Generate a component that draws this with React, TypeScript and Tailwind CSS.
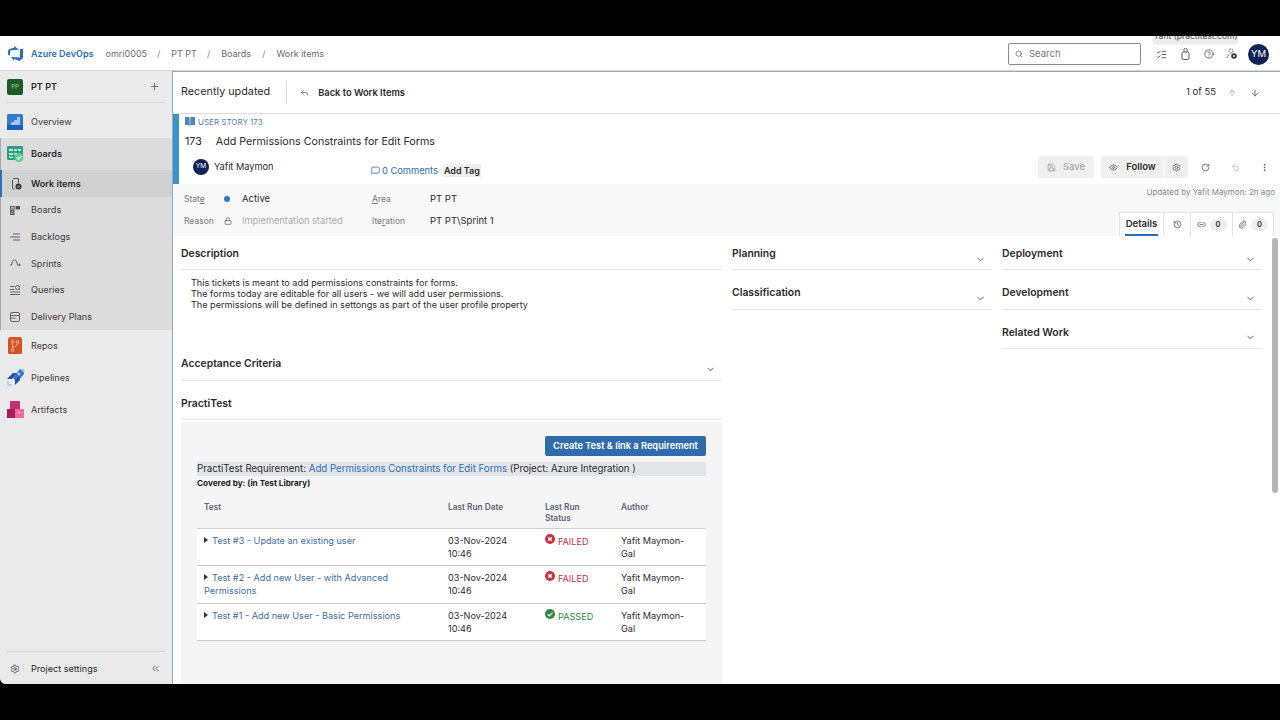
import React from "react";
import { Search, ListChecks, CircleHelp, ArrowUp, ArrowDown, Undo2, Plus, MessageSquare, Save, Eye, Settings, RotateCw, MoreVertical, History, Link2, Paperclip, ChevronDown, Lock, ChevronsLeft, Reply } from "lucide-react";

const Logo = () => (
  <svg width="16" height="16" viewBox="0 0 16 16"><path d="M15 3.600v8.500l-3.500 2.900-5.400-2v2L3 10.900l8.900.7V3l4-.2zM11 3.400L6 0v1.700L1.400 3 0 4.800v4l2 .9V4.500z" fill="#2a6fb5" /></svg>
);
const OverviewIcon = () => (
  <svg width="16" height="16" viewBox="0 0 16 16"><rect width="16" height="16" rx="1.500" fill="#2f7bd0" /><path d="M0 11h16v5H0z" fill="#1d5fb3" /><path d="M4 11V8h3V6h3V3h3v8z" fill="#9cc8f0" /></svg>
);
const BoardsIcon = () => (
  <svg width="18" height="17" viewBox="0 0 18 17"><rect width="16" height="14" rx="1" fill="#2f9e80" /><path d="M2 3h4v2H2zM7 3h3v2H7zM11 3h3v2h-3zM2 7h4v2H2zM7 7h3v2H7zM2 10.500h4v1.500H2z" fill="#b8e6d6" /><circle cx="12" cy="11.500" r="4.500" fill="#5fcf8c" /><path d="M9.800 11.500l1.700 1.700 2.800-3" stroke="#fff" strokeWidth="1.200" fill="none" /></svg>
);
const ReposIcon = () => (
  <svg width="16" height="17" viewBox="0 0 16 17"><path d="M2.500 0h11L15 2v13.500a1.500 1.500 0 0 1-1.500 1.500h-11A1.500 1.500 0 0 1 1 15.500V2z" fill="#d9501e" /><circle cx="5.500" cy="13" r="1.400" fill="none" stroke="#f6b899" /><circle cx="10.500" cy="5" r="1.400" fill="none" stroke="#f6b899" /><circle cx="5.500" cy="4.500" r="1.400" fill="none" stroke="#f6b899" /><path d="M5.500 6v5.500M10.500 6.500c0 3-5 2.500-5 5" fill="none" stroke="#f6b899" /></svg>
);
const PipelinesIcon = () => (
  <svg width="18" height="17" viewBox="0 0 18 17"><path d="M17 0v5l-7 8-4-4 7-9z" fill="#2f6fd8" /><path d="M13 0h4v4z" fill="#9cc4f4" /><circle cx="12" cy="5" r="1.400" fill="#bcd8f8" /><path d="M6 4h4L5 10H0z" fill="#1f4fae" /><path d="M13 7v4l-5 5v-5z" fill="#1f4fae" /><path d="M1 12v4h4" fill="none" stroke="#8fb4e8" strokeWidth="1" /></svg>
);
const ArtifactsIcon = () => (
  <svg width="17" height="17" viewBox="0 0 17 17"><rect x="3" width="10" height="8" fill="#c72c6e" /><rect y="8" width="8" height="9" fill="#a81e5b" /><rect x="8" y="8" width="9" height="9" fill="#ef6a9e" /><rect x="11" y="11" width="3" height="1" fill="#fff" opacity=".7" /></svg>
);
const FailIcon = () => (
  <svg width="10" height="10" viewBox="0 0 10 10" className="shrink-0"><circle cx="5" cy="5" r="5" fill="#c8323c" /><path d="M3.200 3.200l3.600 3.600M6.800 3.200L3.200 6.800" stroke="#fff" strokeWidth="1.400" /></svg>
);
const PassIcon = () => (
  <svg width="10" height="10" viewBox="0 0 10 10" className="shrink-0"><circle cx="5" cy="5" r="5" fill="#2c8a3f" /><path d="M2.600 5.200l1.700 1.700 3.100-3.300" stroke="#fff" strokeWidth="1.300" fill="none" /></svg>
);
const BookIcon = () => (
  <svg width="10" height="9" viewBox="0 0 10 9"><path d="M0 0h3.500c.8 0 1.200.4 1.200 1v8C4.300 8.500 3.800 8 3 8H0z" fill="#4a86bd" /><path d="M10 0H6.500c-.8 0-1.200.4-1.200 1v8c.4-.5.9-1 1.700-1h3z" fill="#4a86bd" /></svg>
);
const WorkItemsIcon = () => (
  <svg width="12" height="13" viewBox="0 0 12 13" fill="none"><path d="M7 1.500h1.500V6M2.500 3V11a1 1 0 0 0 1 1H5" stroke="#555" /><path d="M3 1.500h4" stroke="#555" /><circle cx="8.500" cy="9.500" r="3" fill="#333" /><path d="M7.200 9.500l1 1 1.600-1.800" stroke="#fff" strokeWidth=".8" /></svg>
);
const MiniBoards = () => (
  <svg width="10" height="9" viewBox="0 0 10 9" fill="none" stroke="#555"><rect x=".5" y=".5" width="3.500" height="2.500" /><rect x="6" y=".5" width="3.500" height="2.500" fill="#555" /><rect x=".5" y="4.500" width="3.500" height="1.500" /><rect x=".5" y="7" width="3.500" height="1.500" /></svg>
);
const MiniBacklogs = () => (
  <svg width="10" height="8" viewBox="0 0 10 8" fill="none" stroke="#555" strokeWidth=".9"><path d="M3 1h7M0 4h10M3 7h7" /></svg>
);
const MiniSprints = () => (
  <svg width="11" height="8" viewBox="0 0 11 8" fill="none" stroke="#555" strokeWidth=".9"><path d="M0 6h1.500C2 3.500 2.500 1 4.500 1S7 3.500 7.500 6H10" /><path d="M9 4.700L10.500 6 9 7.300" /></svg>
);
const MiniQueries = () => (
  <svg width="11" height="10" viewBox="0 0 11 10" fill="none" stroke="#555" strokeWidth=".9"><path d="M0 1.500h4.500M0 4.500h4.500M0 7h10M0 9.500h10" /><circle cx="7.500" cy="2.500" r="2" /><path d="M9 4l1 1" /></svg>
);
const MiniPlans = () => (
  <svg width="10" height="10" viewBox="0 0 10 10" fill="none" stroke="#555" strokeWidth=".9"><rect x=".5" y=".5" width="9" height="9" rx="1.500" /><path d="M.5 3.500h9M.5 6h5" /></svg>
);
const BagIcon = () => (
  <svg width="9" height="12" viewBox="0 0 9 12" fill="none" stroke="#555" strokeWidth="1" className="ml-[14px]"><rect x="1" y="4" width="7" height="7.500" rx="1.500" /><path d="M3 4V1.500a1.500 1.500 0 0 1 3 0V4" /></svg>
);
const UserBadge = () => (
  <svg width="12" height="12" viewBox="0 0 12 12" fill="none" className="ml-[12px]"><circle cx="5" cy="3" r="2" stroke="#555" strokeDasharray="1.500 .8" /><path d="M1 10c0-2 1.500-3.500 3-3.500" stroke="#555" strokeDasharray="1.500 .8" /><circle cx="8" cy="8" r="2.800" fill="#333" /><circle cx="8" cy="8" r=".9" fill="#fff" /></svg>
);

function SideMain({ icon, label, bold }: { icon: React.ReactNode; label: string; bold?: boolean }) {
  return (
    <div className="h-8 flex items-center">
      <div className={bold ? "w-[30px] pl-[6px] flex items-center" : "w-[31px] pl-[7px] flex items-center"}>{icon}</div>
      <span className={bold ? "font-semibold text-[#2b2b2b]" : "text-[#3a3a3a]"}>{label}</span>
    </div>
  );
}
function SideSub({ icon, label, active }: { icon: React.ReactNode; label: string; active?: boolean }) {
  return (
    <div className={active ? "h-[27px] flex items-center bg-[#d1d1d1] border-l-2 border-[#2a6fb5] -ml-px" : "h-[26.600px] flex items-center"}>
      <div className={active ? "w-[29px] pl-[8px]" : "w-[30px] pl-[9px]"}>{icon}</div>
      <span className={active ? "font-semibold text-[#2b2b2b]" : "text-[#3a3a3a]"}>{label}</span>
    </div>
  );
}
function Section({ title, chevron, first }: { title: string; chevron?: boolean; first?: boolean }) {
  return (
    <div className={(first ? "h-[34.300px] pt-[11px]" : "h-[39.300px] pt-[16px]") + " border-b border-[#e6e6e6] flex items-start justify-between"}>
      <span className="text-[10.400px] leading-[14px] font-semibold text-[#2b2b2b]">{title}</span>
      {chevron && <ChevronDown size={11} className="mt-[6.500px] mr-[6px] text-[#555]" />}
    </div>
  );
}
const rows = [
  { t: "Test #3 - Update an existing user", s: "FAILED" },
  { t: "Test #2 - Add new User - with Advanced Permissions", s: "FAILED" },
  { t: "Test #1 - Add new User - Basic Permissions", s: "PASSED" },
];

export default function App() {
  return (
    <div className="w-[1280px] h-[720px] bg-black flex flex-col overflow-hidden text-[9px] text-[#2b2b2b]" style={{ fontFamily: "Inter, 'Liberation Sans', sans-serif" }}>
      <div className="h-9 shrink-0" />
      <div className="h-[648px] shrink-0 bg-white rounded-bl-[6px] overflow-hidden flex flex-col relative">
        <div className="absolute left-[1153px] top-[-7px] w-[85px] h-[14px] text-center bg-[#ececec] rounded-[3px] text-[8.500px] leading-[14px] text-[#555] shadow-sm whitespace-nowrap">Yafit (practitest.com)</div>
        {/* top bar */}
        <div className="h-[35px] shrink-0 flex items-center pt-[2px] border-b border-[#d8d8d8] text-[9px]">
          <div className="w-[31px] pl-[8px]"><Logo /></div>
          <span className="font-semibold text-[#2a6fb5]">Azure DevOps</span>
          <span className="ml-[12px] text-[#6b6b6b]">omri0005</span>
          <span className="ml-[10px] text-[#888]">/</span>
          <span className="ml-[11px] text-[#6b6b6b]">PT PT</span>
          <span className="ml-[10px] text-[#888]">/</span>
          <span className="ml-[11px] text-[#6b6b6b]">Boards</span>
          <span className="ml-[11px] text-[#888]">/</span>
          <span className="ml-[11px] text-[#6b6b6b]">Work items</span>
          <div className="ml-auto w-[133px] h-[22px] border border-[#8a8a8a] rounded-[2px] flex items-center pl-[6px] gap-[6px] text-[9.500px] text-[#777]">
            <Search size={8} className="text-[#555]" /><span>Search</span>
          </div>
          <div className="ml-[15px] flex items-center text-[#555]">
            <ListChecks size={11} />
            <BagIcon />
            <CircleHelp size={10} className="ml-[14px]" />
            <UserBadge />
          </div>
          <div className="ml-[10px] mr-[11px] w-[21px] h-[21px] rounded-full bg-[#0f2357] text-white text-[9.500px] flex items-center justify-center">YM</div>
        </div>
        <div className="flex-1 flex min-h-0">
          {/* sidebar */}
          <div className="w-[172px] shrink-0 bg-[#eaeaea] flex flex-col text-[9.100px]">
            <div className="h-[32px] flex items-center mx-[7px] border-b border-[#d9d9d9]">
              <div className="w-[16px] h-[16px] rounded-[2px] bg-[#1c5a26] text-[#9fd3a6] text-[6px] flex items-center justify-center">PP</div>
              <span className="ml-[8px] font-semibold">PT PT</span>
              <Plus size={11} className="ml-auto mr-[5px] text-[#666]" />
            </div>
            <div className="h-[3px]" />
            <SideMain icon={<OverviewIcon />} label="Overview" />
            <div className="bg-[#dcdcdc] border-l border-[#a8a8a8]">
              <SideMain icon={<BoardsIcon />} label="Boards" bold />
              <SideSub active icon={<WorkItemsIcon />} label="Work items" />
              <SideSub icon={<MiniBoards />} label="Boards" />
              <SideSub icon={<MiniBacklogs />} label="Backlogs" />
              <SideSub icon={<MiniSprints />} label="Sprints" />
              <SideSub icon={<MiniQueries />} label="Queries" />
              <SideSub icon={<MiniPlans />} label="Delivery Plans" />
            </div>
            <SideMain icon={<ReposIcon />} label="Repos" />
            <SideMain icon={<PipelinesIcon />} label="Pipelines" />
            <SideMain icon={<ArtifactsIcon />} label="Artifacts" />
            <div className="mt-auto mx-[7px] h-[33px] pt-px border-t border-[#d4d4d4] flex items-center">
              <Settings size={10} className="ml-[3px] text-[#555]" />
              <span className="ml-[11px]">Project settings</span>
              <ChevronsLeft size={11} className="ml-auto mr-[4px] text-[#666]" />
            </div>
          </div>
          {/* main */}
          <div className="flex-1 min-w-0 flex flex-col border-l border-[#8eaacb] border-t border-t-[#9aa9bb]">
            <div className="h-[42px] shrink-0 flex items-center border-b border-[#dcdcdc]">
              <span className="ml-[8px] text-[10.800px] text-[#2b2b2b]">Recently updated</span>
              <div className="ml-[16px] w-px h-[23px] bg-[#d8d8d8]" />
              <Reply size={9} className="ml-[13px] text-[#666]" />
              <span className="ml-[9px] font-semibold text-[9.300px]">Back to Work Items</span>
              <span className="ml-auto text-[9.500px]">1 of 55</span>
              <ArrowUp size={10} className="ml-[11px] text-[#aaa]" />
              <ArrowDown size={10} className="ml-[13px] mr-[20px] text-[#555]" />
            </div>
            <div className="h-[70px] shrink-0 flex">
              <div className="w-[6px] bg-[#3b94c6]" />
              <div className="flex-1 flex flex-col relative">
                <div className="h-[15px] pl-[6px] flex items-center gap-[3px] text-[8px] text-[#5a82a6]">
                  <BookIcon /><span>USER STORY 173</span>
                </div>
                <div className="h-[22px] mt-[2px] pl-[6px] flex items-center text-[10.700px]">
                  <span>173</span><span className="ml-[14px]">Add Permissions Constraints for Edit Forms</span>
                </div>
                <div className="flex items-center mt-[2px] h-[24px]">
                  <div className="ml-[14px] w-[16px] h-[16px] rounded-full bg-[#0f2357] text-white text-[6.500px] flex items-center justify-center">YM</div>
                  <span className="ml-[5px] w-[59px] whitespace-nowrap text-[9.200px] -mt-[1px]">Yafit Maymon</span>
                  <MessageSquare size={9} className="ml-[98px] mt-[7px] text-[#2a6fb5]" />
                  <span className="ml-[2px] mt-[7px] text-[9.300px] text-[#2a6fb5]">0 Comments</span>
                  <span className="ml-[5px] mt-[7px] px-[1px] bg-[#eeeeee] font-semibold text-[9px]">Add Tag</span>
                  <div className="ml-auto flex items-center mr-[11px]">
                    <div className="w-[56px] h-[22px] bg-[#f0f0f0] rounded-[2px] flex items-center justify-center gap-[7px] text-[9.500px] text-[#9a9a9a]"><Save size={9} /><span>Save</span></div>
                    <div className="ml-[7px] w-[63px] h-[22px] bg-[#f0f0f0] rounded-l-[2px] flex items-center justify-center gap-[8px] text-[9.500px] font-semibold"><Eye size={9} className="text-[#555]" /><span>Follow</span></div>
                    <div className="ml-px w-[23px] h-[22px] bg-[#f0f0f0] rounded-r-[2px] flex items-center justify-center"><Settings size={9} className="text-[#555]" /></div>
                    <RotateCw size={9} className="ml-[13px] text-[#555]" />
                    <Undo2 size={9} className="ml-[21px] text-[#bbb]" />
                    <MoreVertical size={9} className="ml-[20px] text-[#444]" />
                  </div>
                </div>
              </div>
            </div>
            <div className="h-[52px] shrink-0 bg-[#f8f8f8] flex relative text-[8.500px]">
              <div className="pl-[11px] pt-[4px] w-[199px]">
                <div className="h-[22px] flex items-center">
                  <span className="w-[40px] text-[#777]">Stat<span className="underline">e</span></span>
                  <span className="w-[6px] h-[6px] rounded-full bg-[#2f78c4]" />
                  <span className="ml-[12px] text-[9.500px]">Active</span>
                </div>
                <div className="h-[22px] flex items-center">
                  <span className="w-[40px] text-[#777]">Reason</span>
                  <Lock size={8} className="text-[#555]" />
                  <span className="ml-[10px] text-[9.250px] text-[#aaa] whitespace-nowrap">Implementation started</span>
                </div>
              </div>
              <div className="pt-[4px]">
                <div className="h-[22px] flex items-center">
                  <span className="w-[58px] text-[#777]"><span className="underline">A</span>rea</span><span className="text-[9.500px]">PT PT</span>
                </div>
                <div className="h-[22px] flex items-center">
                  <span className="w-[58px] text-[#777]">Ite<span className="underline">r</span>ation</span><span className="text-[9.500px]">PT PT\Sprint 1</span>
                </div>
              </div>
              <div className="ml-auto mr-[5px] flex flex-col items-end">
                <span className="text-[8px] text-[#8a8a8a] mt-[2px] leading-[12px] whitespace-nowrap">Updated by Yafit Maymon: 2h ago</span>
                <div className="mt-auto mr-px h-[24px] flex items-stretch border border-b-0 border-[#e2e2e2] bg-white">
                  <div className="w-[43px] flex items-center justify-center relative font-semibold text-[9.500px]">Details<span className="absolute left-[5px] right-[5px] bottom-0 h-[2px] bg-[#2a6fb5]" /></div>
                  <div className="w-[27px] border-l border-[#e2e2e2] flex items-center justify-center"><History size={9} className="text-[#555]" /></div>
                  <div className="w-[42px] border-l border-[#e2e2e2] flex items-center justify-center gap-[4px]"><Link2 size={9} className="text-[#555]" /><span className="w-[17px] h-[12px] rounded-full bg-[#eeeeee] text-[7.500px] font-semibold flex items-center justify-center">0</span></div>
                  <div className="w-[41px] border-l border-[#e2e2e2] flex items-center justify-center gap-[4px]"><Paperclip size={9} className="text-[#555]" /><span className="w-[17px] h-[12px] rounded-full bg-[#eeeeee] text-[7.500px] font-semibold flex items-center justify-center">0</span></div>
                </div>
              </div>
            </div>
            {/* content */}
            <div className="flex-1 min-h-0 flex relative">
              <div className="w-[541px] ml-[8px] flex flex-col shrink-0">
                <Section first title="Description" />
                <div className="h-[71px] pl-[10px] pt-[7px] text-[9.100px] leading-[11px] text-[#2b2b2b]">
                  <p>This tickets is meant to add permissions constraints for forms.</p>
                  <p>The forms today are editable for all users - we will add user permissions.</p>
                  <p>The permissions will be defined in settongs as part of the user profile property</p>
                </div>
                <Section title="Acceptance Criteria" chevron />
                <Section title="PractiTest" />
                <div className="flex-1 mt-[2px] bg-[#f5f5f5] px-[16px] pt-[14px]">
                  <div className="flex justify-end">
                    <div className="h-[20px] w-[161px] rounded-[2px] bg-[#2f6daa] text-white text-[9.250px] font-semibold flex items-center justify-center">Create Test &amp; link a Requirement</div>
                  </div>
                  <div className="mt-[6px] h-[14px] bg-[#e3e5ea] text-[9.680px] leading-[14px] whitespace-nowrap">
                    PractiTest Requirement: <span className="text-[#2a6fb5]">Add Permissions Constraints for Edit Forms</span> (Project: Azure Integration )
                  </div>
                  <div className="h-[14px] text-[8.200px] leading-[14px] font-bold text-[#222]">Covered by: (in Test Library)</div>
                  <div className="grid grid-cols-[251px_97px_76px_1fr] mt-[6px] text-[8.300px] font-semibold text-[#5a6478] leading-[11.500px] h-[33px] border-b border-[#cfcfcf] pt-[6px]">
                    <div className="pl-[7px]">Test</div>
                    <div>Last Run Date</div>
                    <div>Last Run<br />Status</div>
                    <div>Author</div>
                  </div>
                  {rows.map((r) => (
                    <div key={r.t} className="grid grid-cols-[251px_97px_76px_1fr] h-[37.500px] bg-white border-b border-[#c9c9c9] pt-[5px] text-[9.150px] leading-[13px]">
                      <div className="pl-[7px] pr-[30px] text-[#3d6d9e]">
                        <span className="inline-block w-0 h-0 mr-[4px] align-[1px] border-y-[3px] border-y-transparent border-l-[4px] border-l-[#333]" />{r.t}
                      </div>
                      <div>03-Nov-2024<br />10:46</div>
                      <div className="flex items-start gap-[3px]">
                        {r.s === "FAILED" ? <FailIcon /> : <PassIcon />}
                        <span className={r.s === "FAILED" ? "text-[#c8323c] mt-px" : "text-[#2c8a3f] mt-px"}>{r.s}</span>
                      </div>
                      <div className="pr-[12px]">Yafit Maymon-<br />Gal</div>
                    </div>
                  ))}
                </div>
              </div>
              <div className="w-[260px] ml-[10px] shrink-0">
                <Section first title="Planning" chevron />
                <Section title="Classification" chevron />
              </div>
              <div className="w-[260px] ml-[10px] shrink-0">
                <Section first title="Deployment" chevron />
                <Section title="Development" chevron />
                <Section title="Related Work" chevron />
              </div>
              <div className="absolute right-[2px] top-[2px] w-[6px] h-[255px] rounded-[3px] bg-[#b5b5b5]" />
            </div>
          </div>
        </div>
      </div>
      <div className="flex-1" />
    </div>
  );
}
